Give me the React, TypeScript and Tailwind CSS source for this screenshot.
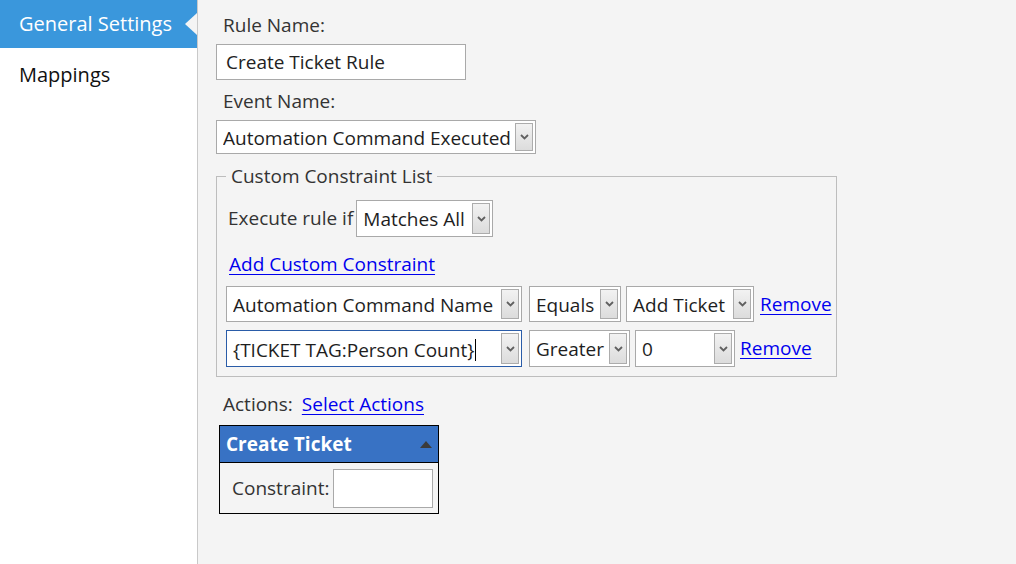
import React from 'react';

// Small dropdown arrow button used at the right edge of every combo box
const DropButton: React.FC = () => (
  <div className="flex h-full w-[18px] shrink-0 items-center justify-center border border-[#acacac] bg-gradient-to-b from-[#f2f2f2] to-[#dcdcdc]">
    <svg width="9" height="6" viewBox="0 0 9 6">
      <path d="M1 1l3.5 3.5L8 1" fill="none" stroke="#606060" strokeWidth="1.8" />
    </svg>
  </div>
);

interface ComboProps {
  value: string;
  width: string;
  height?: string;
  focused?: boolean;
  caret?: boolean;
}

const Combo: React.FC<ComboProps> = ({ value, width, height = 'h-[36px]', focused, caret }) => (
  <div
    className={`flex ${width} ${height} shrink-0 items-center border bg-white py-[2px] pr-[2px] pl-[6px] ${
      focused ? 'border-[#2a5ca8]' : 'border-[#a9a9a9]'
    }`}
  >
    <span className="flex-1 translate-y-[1px] truncate whitespace-nowrap text-[#1e1e1e]">
      {value}
      {caret && <span className="ml-[1px] inline-block h-[22px] w-[1px] translate-y-[4px] bg-black" />}
    </span>
    <DropButton />
  </div>
);

const Link: React.FC<{ children: React.ReactNode; className?: string }> = ({ children, className = '' }) => (
  <a href="#" className={`shrink-0 whitespace-nowrap text-[#0000ee] underline underline-offset-[3px] ${className}`}>
    {children}
  </a>
);

export default function App() {
  return (
    <div
      className="flex h-[564px] w-[1016px] overflow-hidden text-[19px] text-[#333]"
      style={{ fontFamily: '"Open Sans", "Noto Sans", sans-serif' }}
    >
      {/* Sidebar */}
      <aside className="w-[198px] shrink-0 border-r border-[#c9c9c9] bg-white text-[20px]">
        <div className="relative flex h-[48px] items-center bg-[#3a97dc] px-[19px] text-white">
          General Settings
          <span className="absolute top-[13px] right-0 h-0 w-0 border-y-[11px] border-r-[12px] border-y-transparent border-r-[#f4f4f4]" />
        </div>
        <div className="flex h-[54px] items-center px-[19px] text-[#111]">Mappings</div>
      </aside>

      {/* Main form */}
      <main className="flex flex-1 flex-col items-start bg-[#f4f4f4] pt-[11px] pl-[18px]">
        <div className="ml-[7px] h-[28px] leading-[28px]">Rule Name:</div>
        <div className="mt-[5px] flex h-[36px] w-[250px] items-center border border-[#a9a9a9] bg-white px-[9px] text-[#222]">
          Create Ticket Rule
        </div>

        <div className="mt-[7px] ml-[7px] h-[28px] leading-[28px]">Event Name:</div>
        <div className="mt-[5px]">
          <Combo value="Automation Command Executed" width="w-[320px]" height="h-[34px]" />
        </div>

        <fieldset className="mt-[10px] w-[621px] min-w-0 border border-[#bdbdbd] pr-[5px] pb-[9px] pl-[9px]">
          <legend className="px-[5px] leading-[24px]">Custom Constraint List</legend>

          <div className="mt-[12px] flex items-center">
            <span className="mr-[3px] ml-[2px] whitespace-nowrap">Execute rule if</span>
            <Combo value="Matches All" width="w-[137px]" height="h-[37px]" />
          </div>

          <div className="mt-[13px] ml-[3px] h-[28px] leading-[28px]">
            <Link>Add Custom Constraint</Link>
          </div>

          <div className="mt-[8px] flex items-center">
            <Combo value="Automation Command Name" width="w-[296px]" height="h-[36px]" />
            <div className="ml-[7px]">
              <Combo value="Equals" width="w-[92px]" height="h-[36px]" />
            </div>
            <div className="ml-[5px]">
              <Combo value="Add Ticket" width="w-[128px]" height="h-[36px]" />
            </div>
            <Link className="ml-[6px]">Remove</Link>
          </div>

          <div className="mt-[8px] flex items-center">
            <Combo value="{TICKET TAG:Person Count}" width="w-[296px]" height="h-[37px]" focused caret />
            <div className="ml-[7px]">
              <Combo value="Greater" width="w-[101px]" height="h-[37px]" />
            </div>
            <div className="ml-[5px]">
              <Combo value="0" width="w-[100px]" height="h-[37px]" />
            </div>
            <Link className="ml-[5px]">Remove</Link>
          </div>
        </fieldset>

        <div className="mt-[13px] ml-[7px] flex h-[28px] items-center gap-[9px]">
          <span>Actions:</span>
          <Link>Select Actions</Link>
        </div>

        {/* Action card */}
        <div className="mt-[7px] ml-[3px] w-[220px] border border-black">
          <div className="flex h-[36px] items-center justify-between bg-[#3872c4] pr-[6px] pl-[6px] font-bold text-white">
            <span>Create Ticket</span>
            <svg width="12" height="7" viewBox="0 0 12 7">
              <path d="M0 7L6 0l6 7z" fill="#3b3b3b" />
            </svg>
          </div>
          <div className="flex items-center border-t border-black pt-[6px] pr-[5px] pb-[5px] pl-[12px]">
            <span className="mr-[4px]">Constraint:</span>
            <div className="h-[39px] w-[100px] shrink-0 border border-[#a9a9a9] bg-white" />
          </div>
        </div>
      </main>
    </div>
  );
}
